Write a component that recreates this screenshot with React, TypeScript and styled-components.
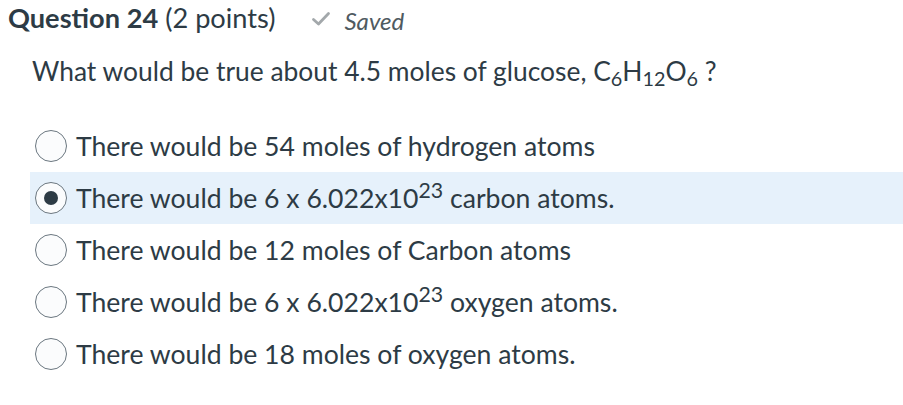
import React from 'react'
import styled, { createGlobalStyle } from 'styled-components'

const Global = createGlobalStyle`
  body {
    margin: 0;
    background: #fff;
    font-family: Lato, "Open Sans", sans-serif;
    color: #2d3b45;
  }
`

interface Choice {
  id: string
  text: React.ReactNode
}

const choices: Choice[] = [
  { id: 'a', text: 'There would be 54 moles of hydrogen atoms' },
  { id: 'b', text: <>There would be 6 x 6.022x10<sup>23</sup> carbon atoms.</> },
  { id: 'c', text: 'There would be 12 moles of Carbon atoms' },
  { id: 'd', text: <>There would be 6 x 6.022x10<sup>23</sup> oxygen atoms.</> },
  { id: 'e', text: 'There would be 18 moles of oxygen atoms.' },
]

export default function App() {
  const selected = 'b'
  return (
    <Page>
      <Global />
      <Header>
        <Title>
          <b>Question 24</b> (2 points)
        </Title>
        <Status>
          <svg width="20" height="16" viewBox="0 0 20 16">
            <path d="M2.5 8.5 L7.5 13 L17.5 2.5" fill="none" stroke="#a3a8ab" strokeWidth="2.8" strokeLinecap="round" strokeLinejoin="round" />
          </svg>
          <i>Saved</i>
        </Status>
      </Header>
      <Prompt>
        What would be true about 4.5 moles of glucose, C<sub>6</sub>H<sub>12</sub>O<sub>6</sub> ?
      </Prompt>
      <Choices>
        {choices.map((c) => (
          <Row key={c.id} $active={c.id === selected}>
            <Radio $checked={c.id === selected} />
            <Label>{c.text}</Label>
          </Row>
        ))}
      </Choices>
    </Page>
  )
}

const Page = styled.div`
  width: 903px;
  height: 405px;
  overflow: hidden;
`

const Header = styled.div`
  display: flex;
  align-items: baseline;
  padding: 0 0 0 8px;
  height: 36px;
`

const Title = styled.div`
  font-size: 27.2px;
  line-height: 36px;
  color: #2d3b45;
  b { font-weight: 700; }
`

const Status = styled.div`
  display: flex;
  align-items: center;
  gap: 13px;
  margin-left: 36px;
  font-size: 24px;
  color: #4f5a61;
  svg { position: relative; top: -1px; }
`

const Prompt = styled.div`
  padding: 19px 0 0 32px;
  font-size: 26.4px;
  line-height: 32px;
  sub {
    font-size: 0.75em;
    vertical-align: -0.25em;
    line-height: 0;
  }
`

const Choices = styled.div`
  display: flex;
  flex-direction: column;
  padding: 33px 0 0 30px;
`

const Row = styled.div<{ $active: boolean }>`
  display: flex;
  align-items: center;
  height: 52px;
  padding-left: 5px;
  background: ${(p) => (p.$active ? '#e6f1fb' : 'transparent')};
`

const Radio = styled.span<{ $checked: boolean }>`
  width: 32px;
  height: 32px;
  box-sizing: border-box;
  border-radius: 50%;
  border: 1px solid #6b7780;
  background: #fbfcfd;
  display: flex;
  align-items: center;
  justify-content: center;
  flex-shrink: 0;
  &::after {
    content: '';
    width: 14px;
    height: 14px;
    border-radius: 50%;
    background: #2d3b45;
    display: ${(p) => (p.$checked ? 'block' : 'none')};
  }
`

const Label = styled.span`
  margin-left: 9px;
  font-size: 26.6px;
  color: #2d3b45;
  sup {
    font-size: 0.8em;
    vertical-align: 0.45em;
    line-height: 0;
  }
`
